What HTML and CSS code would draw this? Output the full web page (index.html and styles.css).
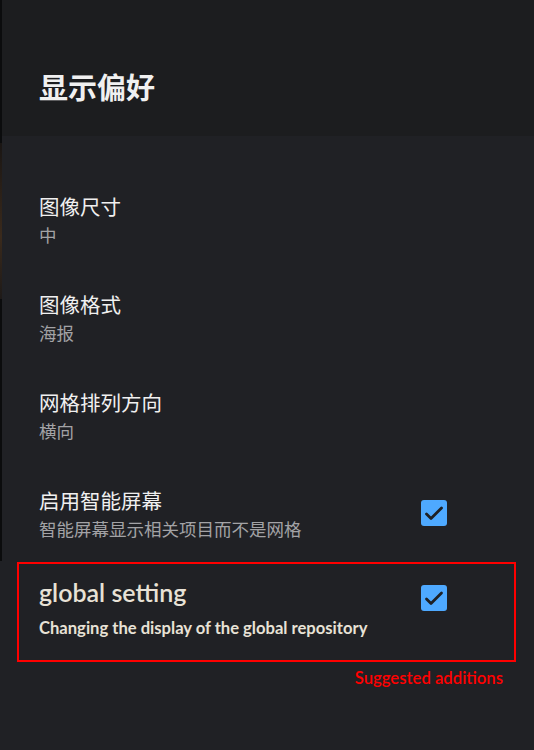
FILE: index.html
```html
<!DOCTYPE html>
<html lang="zh">
<head>
<meta charset="utf-8">
<link rel="stylesheet" href="styles.css">
</head>
<body>
<div class="screen">
  <div class="edge">
    <div class="edge-img"></div>
  </div>
  <div class="panel">
    <header class="head">
      <h1 class="title">显示偏好</h1>
    </header>
    <div class="list">
      <div class="item">
        <div class="text">
          <div class="label">图像尺寸</div>
          <div class="sub">中</div>
        </div>
      </div>
      <div class="item">
        <div class="text">
          <div class="label">图像格式</div>
          <div class="sub">海报</div>
        </div>
      </div>
      <div class="item">
        <div class="text">
          <div class="label">网格排列方向</div>
          <div class="sub">横向</div>
        </div>
      </div>
      <div class="item">
        <div class="text">
          <div class="label">启用智能屏幕</div>
          <div class="sub">智能屏幕显示相关项目而不是网格</div>
        </div>
        <span class="check"><svg viewBox="0 0 26 26" width="26" height="26"><path d="M5.5 14l4.5 4.5L20.5 8" fill="none" stroke="#1e2024" stroke-width="2.8" stroke-linecap="round" stroke-linejoin="round"/></svg></span>
      </div>
      <div class="suggest">
        <div class="item added">
          <div class="text">
            <div class="label en">global setting</div>
            <div class="sub en">Changing the display of the global repository</div>
          </div>
          <span class="check"><svg viewBox="0 0 26 26" width="26" height="26"><path d="M5.5 14l4.5 4.5L20.5 8" fill="none" stroke="#1e2024" stroke-width="2.8" stroke-linecap="round" stroke-linejoin="round"/></svg></span>
        </div>
      </div>
      <div class="note">Suggested additions</div>
    </div>
  </div>
</div>
</body>
</html>
```
FILE: styles.css
```css
html, body {
  margin: 0;
  padding: 0;
  background: #202125;
}
body {
  width: 534px;
  height: 750px;
  overflow: hidden;
  font-family: "Noto Sans CJK SC", "Noto Sans", sans-serif;
}
.screen {
  display: flex;
  height: 750px;
}
.edge {
  width: 2px;
  height: 561px;
  background: #0b0c0d;
  display: flex;
  flex-direction: column;
  padding-top: 143px;
  box-sizing: border-box;
}
.edge-img {
  height: 156px;
  background: linear-gradient(#1a1614, #2a2018 30%, #3a2a1c 60%, #1e1a18);
}
.panel {
  flex: 1;
  display: flex;
  flex-direction: column;
  background: #202125;
}
.head {
  height: 136px;
  background: #1c1d1f;
  display: flex;
  align-items: center;
  padding: 36px 0 0 37px;
  box-sizing: border-box;
}
.title {
  margin: 0;
  font-size: 29px;
  font-weight: 700;
  color: #f0f0f0;
  line-height: 1;
}
.list {
  display: flex;
  flex-direction: column;
  padding-top: 57px;
}
.item {
  display: flex;
  align-items: flex-start;
  justify-content: space-between;
  padding: 0 87px 0 37px;
  height: 98px;
  box-sizing: border-box;
}
.text {
  display: flex;
  flex-direction: column;
}
.label {
  font-size: 20.5px;
  line-height: 26px;
  color: #f0f0f0;
}
.sub {
  font-size: 17.5px;
  line-height: 24px;
  color: #a3a3a6;
  margin-top: 4px;
}
.check {
  width: 26px;
  height: 26px;
  border-radius: 3px;
  background: #4ea9ff;
  display: flex;
  margin-top: 13px;
}
.suggest {
  margin: -23px 18px 0 15px;
  border: 2px solid #ff0000;
  height: 100px;
  box-sizing: border-box;
}
.item.added {
  padding: 13px 67px 0 20px;
  height: 96px;
}
.item.added .check {
  margin-top: 8px;
}
.label.en {
  font-family: Lato, "Noto Sans", sans-serif;
  font-size: 25px;
  line-height: 30px;
  font-weight: 600;
  color: #e8e2d6;
}
.sub.en {
  font-family: Lato, "Noto Sans", sans-serif;
  font-size: 16.6px;
  font-weight: 700;
  line-height: 22px;
  color: #e8e2d6;
  margin-top: 9.5px;
}
.note {
  align-self: flex-end;
  margin: 5.5px 31px 0 0;
  font-family: Lato, "Noto Sans", sans-serif;
  font-size: 16.7px;
  line-height: 20px;
  font-weight: 600;
  color: #ff0000;
}
```
